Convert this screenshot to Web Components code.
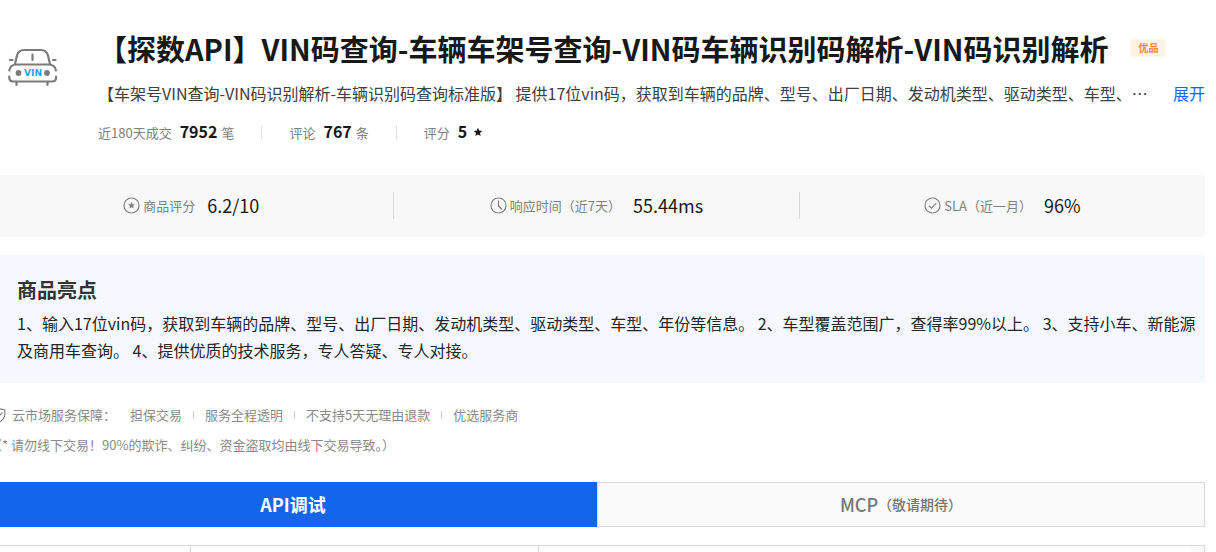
<!DOCTYPE html>
<html lang="zh-CN">
<head>
<meta charset="utf-8">
<title>【探数API】VIN码查询</title>
<style>
html{overflow:hidden}
body{margin:0;background:#fff;color:#181818;font-family:"Noto Sans CJK SC",sans-serif;font-size:16px}
</style>
</head>
<body>
<product-page></product-page>
<script>
const define=(name,html)=>customElements.define(name,class extends HTMLElement{
  constructor(){super();this.attachShadow({mode:'open'}).innerHTML=html;}
});

define('car-logo',`<style>:host{display:block;flex:none;width:50px;height:50px}svg{display:block}text{font:bold 9px "DejaVu Sans",sans-serif;fill:#13a5f8}</style>
<svg width="50" height="50" viewBox="0 0 50 50" fill="none" stroke="#7b7b7b" stroke-width="2.2" stroke-linecap="round" aria-label="VIN">
<path d="M7 22 L9 13.500 Q10.500 8 16 8 H33 Q38.500 8 40 13.500 L42 22"/><path d="M24.500 12.500 V18 M2 18 H4.500 M45 18 H47.500"/>
<path d="M1.300 28.500 Q2 22.500 9 22.500 H40 Q47 22.500 48 28.500 M1.300 34.500 V36 Q1.500 39.500 5 39.500 H44 Q48 39.500 48 36 V34.500 M8.500 40 V43 M39.500 40 V43"/>
<circle cx="10.500" cy="31" r="2.900" fill="#7b7b7b" stroke="none"/><circle cx="39" cy="31" r="2.900" fill="#7b7b7b" stroke="none"/>
<text x="25" y="34" text-anchor="middle" stroke="none">VIN</text></svg>`);

define('quality-badge',`<style>:host{display:block;flex:none;box-sizing:border-box;width:36px;height:18px;border-radius:4px;background:#fff3e8;color:#ff8533;font-size:10px;font-weight:700;line-height:18px;text-align:center}</style><slot></slot>`);

define('sales-figure',`<style>:host{display:flex;align-items:baseline;color:#808080;font-size:13px;line-height:24px}
:host(:not(:first-of-type))::before{content:"";align-self:center;width:1px;height:13px;margin:0 27px;background:#ddd}
b{margin:0 4px 0 8px;color:#181818;font-size:16px;font-weight:700}</style><slot></slot><b><slot name="value"></slot></b><slot name="unit"></slot>`);

define('product-header',`<style>
:host{display:flex;padding:28px 0 30px 19px;gap:40px}
car-logo{margin-top:14px}
.info{flex:1;min-width:0}
.title{display:flex;align-items:center;gap:22px}
h1{margin:0;font-size:29px;line-height:40px;font-weight:700;white-space:nowrap}
.desc{display:flex;justify-content:space-between;margin-top:13px;line-height:24px;white-space:nowrap}
p{margin:0;color:#404040}
a{color:#1366ec;text-decoration:none}
.figures{display:flex;margin-top:14px}
svg{align-self:center;margin-left:2px}
</style>
<car-logo></car-logo>
<div class="info">
<div class="title"><h1>【探数API】VIN码查询-车辆车架号查询-VIN码车辆识别码解析-VIN码识别解析</h1><quality-badge>优品</quality-badge></div>
<div class="desc"><p>【车架号VIN查询-VIN码识别解析-车辆识别码查询标准版】 提供17位vin码，获取到车辆的品牌、型号、出厂日期、发动机类型、驱动类型、车型、…</p><a href="#more">展开</a></div>
<div class="figures">
<sales-figure>近180天成交<span slot="value">7952</span><span slot="unit">笔</span></sales-figure>
<sales-figure>评论<span slot="value">767</span><span slot="unit">条</span></sales-figure>
<sales-figure>评分<span slot="value">5</span></sales-figure>
<svg width="10" height="10" viewBox="0 0 10 10"><path fill="#181818" d="M5 .8 6.200 3.600 9.200 3.900 7 6 7.600 9 5 7.400 2.400 9 3 6 .8 3.900 3.800 3.600Z"/></svg>
</div></div>`);

define('stat-item',`<style>
:host{display:flex;align-items:center;justify-content:center;height:27px;line-height:27px;color:#808080;font-size:13px;white-space:nowrap}
:host(:not(:last-of-type)){border-right:1px solid #d9d9d9}
span{margin-left:3px}
b{margin-left:12px;color:#181818;font-size:18px;font-weight:400}
</style><slot name="icon"></slot><span><slot></slot></span><b><slot name="value"></slot></b>`);

define('stat-bar',`<style>
:host{display:grid;grid-template-columns:repeat(3,1fr);padding:17px 0 18px;background:#f8f8f8}
svg{display:block;fill:none;stroke:#808080;stroke-width:1.2}
</style>
<stat-item><svg slot="icon" width="17" height="17" viewBox="0 0 17 17"><circle cx="8.500" cy="8.500" r="7.500"/><path fill="#808080" stroke="none" d="M8.500 5 9.500 7.300 12 7.500 10.100 9.100 10.700 11.600 8.500 10.300 6.300 11.600 6.900 9.100 5 7.500 7.500 7.300Z"/></svg>商品评分<span slot="value">6.2/10</span></stat-item>
<stat-item><svg slot="icon" width="17" height="17" viewBox="0 0 17 17"><circle cx="8.500" cy="8.500" r="7.500"/><path d="M8.500 3.500V9L12 12.500"/></svg>响应时间（近7天）<span slot="value">55.44ms</span></stat-item>
<stat-item><svg slot="icon" width="17" height="17" viewBox="0 0 17 17"><circle cx="8.500" cy="8.500" r="7.500"/><path d="M4.800 8.700 7.500 11.200 12.300 6.200"/></svg>SLA（近一月）<span slot="value">96%</span></stat-item>`);

define('product-highlights',`<style>
:host{display:block;margin-top:18px;padding:20px 9px 19px 28px;background:#f5f9ff}
h2{margin:0;color:#333;font-size:20px;line-height:30px;font-weight:700}
p{margin:5px 0 0;color:#262626;line-height:27px}
</style><h2>商品亮点</h2><p><slot></slot></p>`);

define('service-guarantee',`<style>
:host{display:block;padding-top:18px;color:#8a8a8a;font-size:13px;line-height:28px}
.row{display:flex;align-items:center}
svg{flex:none}
.label{margin:0 14px 0 6px}
ul{display:flex;margin:0;padding:0;list-style:none}
li{display:flex;align-items:center}
li+li::before{content:"";width:1px;height:8px;margin:0 11px;background:#ccc}
p{margin:2px 0 0}
</style>
<div class="row"><svg width="17" height="17" viewBox="0 0 17 17" fill="none" stroke="#808080" stroke-width="1.200"><path d="M8.500 1.200 15.800 3V7.500Q15.500 13 8.500 16 1.500 13 1.200 7.500V3Z"/><path d="M5 8 8 11 13.500 5.500"/></svg>
<span class="label">云市场服务保障：</span><ul><li>担保交易</li><li>服务全程透明</li><li>不支持5天无理由退款</li><li>优选服务商</li></ul></div>
<p>（* 请勿线下交易！90%的欺诈、纠纷、资金盗取均由线下交易导致。）</p>`);

define('debug-tabs',`<style>
:host{display:grid;grid-template-columns:1fr 1fr;margin-top:23px}
button{display:flex;align-items:center;justify-content:center;box-sizing:border-box;height:45px;margin:0;padding:0 0 2px;border:1px solid #d9d9d9;border-radius:0;background:#fafafa;color:#777;font-family:inherit;font-size:18px;font-weight:500}
button[aria-selected=true]{border-color:#1366ec;background:#1366ec;color:#fff;font-weight:700}
small{font-size:14px}
</style>
<button role="tab" aria-selected="true">API调试</button><button role="tab" aria-selected="false">MCP<small>（敬请期待）</small></button>`);

define('debug-panels',`<style>
:host{display:grid;grid-template-columns:200px 348px 1fr;margin-top:18px;border:1px solid #d9d9d9;border-bottom:0}
div{min-height:6px}
div+div{border-left:1px solid #d9d9d9}
.work{display:flex;justify-content:flex-end}
.work::after{content:"";width:13px;background:#fafafa}
</style><div></div><div></div><div class="work"></div>`);

define('product-page',`<style>
:host{display:block;margin:0 11px 0 -11px}
</style>
<product-header></product-header>
<stat-bar></stat-bar>
<product-highlights>1、输入17位vin码，获取到车辆的品牌、型号、出厂日期、发动机类型、驱动类型、车型、年份等信息。 2、车型覆盖范围广，查得率99%以上。 3、支持小车、新能源及商用车查询。 4、提供优质的技术服务，专人答疑、专人对接。</product-highlights>
<service-guarantee></service-guarantee>
<debug-tabs role="tablist"></debug-tabs>
<debug-panels></debug-panels>`);
</script>
</body>
</html>
